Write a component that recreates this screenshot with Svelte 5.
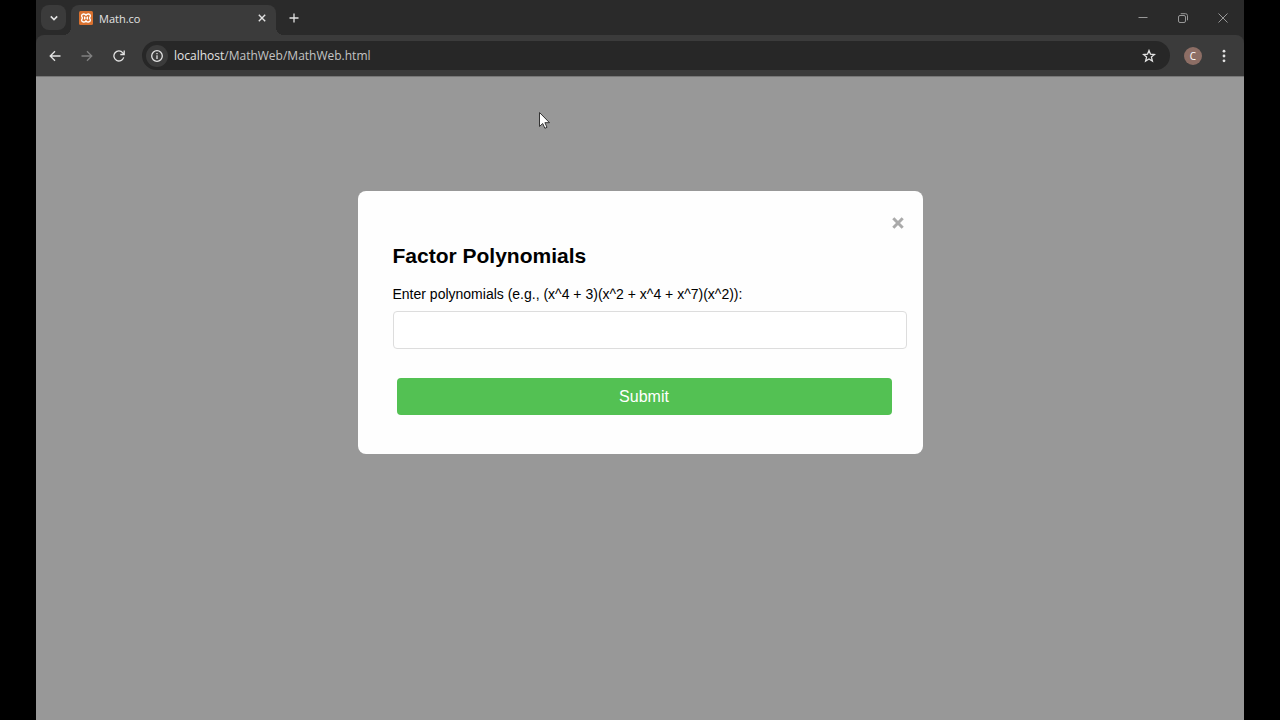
<script>
    let tabTitle = 'Math.co'
    let host = 'localhost'
    let path = '/MathWeb/MathWeb.html'
    let polynomials = $state('')

    function handleSubmit(e) {
        e.preventDefault()
    }
</script>

<style>
    :global(body) {
        margin: 0;
        background: #000;
    }

    * {
        box-sizing: border-box;
    }

    button {
        display: flex;
        align-items: center;
        justify-content: center;
        margin: 0;
        padding: 0;
        border: none;
        background: none;
        color: inherit;
        font: inherit;
    }

    svg {
        display: block;
        fill: none;
        stroke: currentColor;
    }

    .window {
        display: flex;
        flex-direction: column;
        position: relative;
        height: 100vh;
        margin: 0 36px;
        background: #2a2a2a;
        color: #e3e3e3;
        font-family: "Open Sans", "Noto Sans", sans-serif;
        overflow: hidden;
    }

    /* tab strip */
    .tabs {
        display: flex;
        align-items: center;
        height: 35px;
        padding-left: 5px;
    }

    .search-tabs {
        width: 25px;
        height: 25px;
        border-radius: 8px;
        background: #3b3b3b;
    }

    .tab {
        display: flex;
        align-items: center;
        align-self: flex-end;
        position: relative;
        width: 205px;
        height: 30px;
        margin-left: 5px;
        padding: 0 6px 4px 8px;
        border-radius: 8px 8px 0 0;
        background: #3b3b3b;
        font-size: 11px;
    }

    .tab::after {
        content: "";
        position: absolute;
        right: -8px;
        bottom: 0;
        width: 8px;
        height: 8px;
        background: radial-gradient(circle at 100% 0, transparent 8px, #3b3b3b 8px);
    }

    .tab::before {
        content: "";
        position: absolute;
        left: -8px;
        bottom: 0;
        width: 8px;
        height: 8px;
        background: radial-gradient(circle at 0 0, transparent 8px, #3b3b3b 8px);
    }

    .tab span {
        flex: 1;
        margin-left: 6px;
    }

    .tab button {
        width: 16px;
        height: 16px;
    }

    .new-tab {
        width: 24px;
        height: 24px;
        margin-left: 6px;
    }

    .controls {
        display: flex;
        margin-left: auto;
        padding-right: 1px;
        color: #989898;
    }

    .controls button {
        width: 40px;
        height: 35px;
    }

    /* toolbar */
    .toolbar {
        display: flex;
        align-items: center;
        height: 41px;
        padding: 0 8px 0 3px;
        border-radius: 8px 8px 0 0;
        background: #3b3b3b;
    }

    .nav {
        width: 32px;
        height: 32px;
    }

    .nav:disabled {
        color: #808080;
    }

    .address {
        display: flex;
        align-items: center;
        flex: 1;
        height: 29px;
        margin: 0 14px 0 7px;
        padding: 0 14px 0 4px;
        border-radius: 15px;
        background: #272727;
        font-size: 12px;
    }

    .info {
        width: 22px;
        height: 22px;
        margin-right: 6px;
        border-radius: 50%;
        background: #3b3b3b;
    }

    .url {
        flex: 1;
        color: #c4c4c4;
    }

    .url b {
        color: #e3e3e3;
        font-weight: 400;
    }

    .avatar {
        width: 18px;
        height: 18px;
        margin-right: 10px;
        border-radius: 50%;
        background: #8d6e65;
        color: #fff;
        font-size: 10px;
    }

    .menu {
        width: 24px;
        height: 24px;
    }

    /* page */
    .page {
        flex: 1;
        padding: 114px 16px 0;
        border-top: 1px solid #777;
        background: #989898;
        color: #000;
        font-family: "Liberation Sans", Arial, sans-serif;
    }

    .modal {
        width: 100%;
        max-width: 565px;
        margin: 0 auto;
        padding: 20px 16px 39px 35px;
        border-radius: 8px;
        background: #fefefe;
    }

    .close {
        width: 18px;
        height: 24px;
        margin-left: auto;
        color: #aaa;
    }

    h2 {
        margin: 8px 0 16px;
        font-size: 21px;
        line-height: 26px;
    }

    label {
        display: block;
        margin-bottom: 8px;
        font-size: 14px;
        line-height: 18px;
    }

    input {
        display: block;
        width: 100%;
        height: 38px;
        padding: 8px;
        border: 1px solid #ddd;
        border-radius: 4px;
        background: #fff;
        font: inherit;
    }

    .submit {
        width: calc(100% - 19px);
        height: 37px;
        margin: 29px 0 0 4px;
        border-radius: 4px;
        background: #53c153;
        color: #fff;
        font-size: 16px;
    }

    .cursor {
        position: absolute;
        top: 111px;
        left: 502px;
    }
</style>

<div class="window">
    <div class="tabs">
        <button class="search-tabs" aria-label="Search tabs">
            <svg width="10" height="10" viewBox="0 0 10 10" stroke-width="1.6"><path d="M1.8 3.4 5 6.6 8.2 3.4" /></svg>
        </button>
        <div class="tab">
            <svg width="14" height="14" viewBox="0 0 14 14">
                <rect width="14" height="14" rx="1.5" fill="#d9712f" stroke="none" />
                <path d="M7 4.200C6 2.500 2.800 2.500 2.600 4.700c0 1 .8 1.500.8 2.300s-.8 1.300-.8 2.300c.2 2.200 3.400 2.200 4.400.5 1 1.700 4.200 1.700 4.400-.5 0-1-.8-1.500-.8-2.300s.8-1.300.8-2.300C11.200 2.500 8 2.500 7 4.200Z" stroke="#fff" stroke-width="1.400" />
                <path d="M5.500 5.400V8.600M8.500 5.400V8.600M5.500 7H8.500" stroke="#fff" stroke-width="1.100" />
            </svg>
            <span>{tabTitle}</span>
            <button aria-label="Close tab">
                <svg width="8" height="8" viewBox="0 0 8 8" stroke-width="1.4"><path d="M.8.8 7.200 7.200M7.200.8.8 7.200" /></svg>
            </button>
        </div>
        <button class="new-tab" aria-label="New tab">
            <svg width="10" height="10" viewBox="0 0 10 10" stroke-width="1.3"><path d="M5 .5v9M.5 5h9" /></svg>
        </button>
        <div class="controls">
            <button aria-label="Minimize">
                <svg width="10" height="10" viewBox="0 0 10 10"><path d="M.5 4.500h9" /></svg>
            </button>
            <button aria-label="Restore">
                <svg width="10" height="10" viewBox="0 0 10 10"><rect x=".5" y="2.500" width="7" height="7" rx="1.500" /><path d="M2.700.7H7.500a2 2 0 0 1 2 2V7.300" /></svg>
            </button>
            <button aria-label="Close window">
                <svg width="10" height="10" viewBox="0 0 10 10"><path d="M.5.5l9 9M9.500.5l-9 9" /></svg>
            </button>
        </div>
    </div>

    <div class="toolbar">
        <button class="nav" aria-label="Back">
            <svg width="12" height="12" viewBox="0 0 12 12" stroke-width="1.300"><path d="M11.500 6H1.500M6 1.200 1.200 6 6 10.800" /></svg>
        </button>
        <button class="nav" aria-label="Forward" disabled>
            <svg width="12" height="12" viewBox="0 0 12 12" stroke-width="1.300"><path d="M.5 6h10M6 1.200 10.800 6 6 10.800" /></svg>
        </button>
        <button class="nav" aria-label="Reload">
            <svg width="12" height="12" viewBox="0 0 12 12" stroke-width="1.300"><path d="M10.700 7.400A5 5 0 1 1 9.800 2.800L11 4.200M11.200.6V4.500H7.300" /></svg>
        </button>
        <div class="address">
            <button class="info" aria-label="Site information">
                <svg width="12" height="12" viewBox="0 0 12 12" stroke-width="1.300"><circle cx="6" cy="6" r="5.300" /><path d="M6 5.300V9M6 3v1.300" /></svg>
            </button>
            <span class="url"><b>{host}</b>{path}</span>
            <button aria-label="Bookmark this tab">
                <svg width="14" height="14" viewBox="0 0 14 14" stroke-width="1.300"><path d="M7 1.500 8.500 5.200 12.500 5.500 9.400 8.100 10.400 12 7 9.900 3.600 12 4.600 8.100 1.500 5.500 5.500 5.200Z" /></svg>
            </button>
        </div>
        <button class="avatar">C</button>
        <button class="menu" aria-label="Browser menu">
            <svg width="4" height="14" viewBox="0 0 4 14" stroke="none"><g fill="currentColor" stroke="none"><circle cx="2" cy="2.200" r="1.400" /><circle cx="2" cy="7" r="1.400" /><circle cx="2" cy="11.800" r="1.400" /></g></svg>
        </button>
    </div>

    <main class="page">
        <form class="modal" onsubmit={handleSubmit}>
            <button type="button" class="close" aria-label="Close">
                <svg width="12" height="12" viewBox="0 0 12 12" stroke-width="3"><path d="M1.300 1.300l9.400 9.400M10.700 1.300l-9.400 9.400" /></svg>
            </button>
            <h2>Factor Polynomials</h2>
            <label for="polynomials">Enter polynomials (e.g., (x^4 + 3)(x^2 + x^4 + x^7)(x^2)):</label>
            <input id="polynomials" type="text" bind:value={polynomials}>
            <button type="submit" class="submit">Submit</button>
        </form>
    </main>

    <svg class="cursor" width="13" height="19" viewBox="0 0 13 19">
        <path d="M1.500 1.500V15.500L4.700 12.500 6.900 17.300 9 16.300 6.900 11.700H11.500Z" fill="#fff" stroke="#333" />
    </svg>
</div>
